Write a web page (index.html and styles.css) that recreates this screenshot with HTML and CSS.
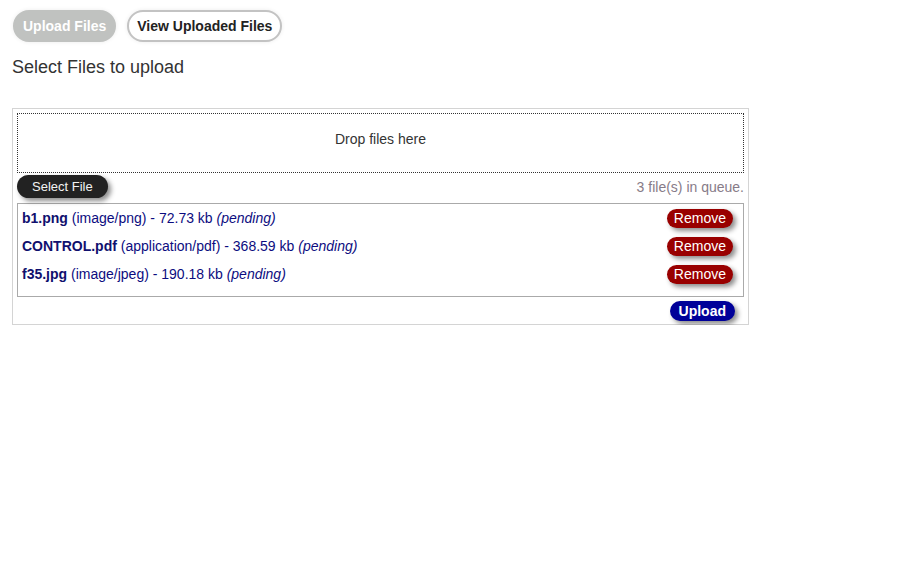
FILE: index.html
```html
<!DOCTYPE html>
<html>
<head>
<meta charset="utf-8">
<link rel="stylesheet" href="styles.css">
</head>
<body>
<div class="page">
  <nav class="tabs">
    <button class="tab tab-active">Upload Files</button>
    <button class="tab">View Uploaded Files</button>
  </nav>
  <h2 class="title">Select Files to upload</h2>
  <div class="uploader">
    <div class="dropzone">Drop files here</div>
    <div class="toolbar">
      <button class="btn-select">Select File</button>
      <span class="queue">3 file(s) in queue.</span>
    </div>
    <div class="filelist">
      <div class="file">
        <span class="info"><b>b1.png</b> (image/png) - 72.73 kb <i>(pending)</i></span>
        <button class="btn-remove">Remove</button>
      </div>
      <div class="file">
        <span class="info"><b>CONTROL.pdf</b> (application/pdf) - 368.59 kb <i>(pending)</i></span>
        <button class="btn-remove">Remove</button>
      </div>
      <div class="file">
        <span class="info"><b>f35.jpg</b> (image/jpeg) - 190.18 kb <i>(pending)</i></span>
        <button class="btn-remove">Remove</button>
      </div>
    </div>
    <div class="actions">
      <button class="btn-upload">Upload</button>
    </div>
  </div>
</div>
</body>
</html>
```

FILE: styles.css
```css
html, body {
  margin: 0;
  padding: 0;
  background: #fff;
  font-family: Arial, "Liberation Sans", sans-serif;
}

.page {
  padding: 10px 0 0 12px;
}

.tabs {
  display: flex;
  gap: 11px;
  padding-left: 1px;
}

.tab {
  height: 32px;
  padding: 0 8px;
  border: 2px solid #c3c3c3;
  border-radius: 16px;
  background: #fff;
  color: #222;
  font-family: Arial, "Liberation Sans", sans-serif;
  font-weight: bold;
  font-size: 14px;
  box-shadow: 0 0 4px rgba(0,0,0,0.08);
}

.tab-active {
  background: #c0c2c0;
  border-color: #c0c2c0;
  color: #fff;
}

.title {
  margin: 15px 0 0 0;
  font-size: 18px;
  font-weight: normal;
  color: #333;
  line-height: 21px;
}

.uploader {
  margin-top: 30px;
  width: 737px;
  box-sizing: border-box;
  border: 1px solid #d4d4d4;
  padding: 4px 4px 3px 4px;
}

.dropzone {
  height: 60px;
  box-sizing: border-box;
  border: 1px dotted #333;
  padding-top: 17px;
  text-align: center;
  line-height: 16px;
  font-size: 14px;
  color: #333;
}

.toolbar {
  display: flex;
  justify-content: space-between;
  align-items: center;
  margin-top: 2px;
}

.btn-select {
  height: 23px;
  padding: 0 15px;
  border: none;
  border-radius: 12px;
  background: #222;
  color: #f2f2f2;
  font-family: Arial, "Liberation Sans", sans-serif;
  font-size: 13px;
  box-shadow: 3px 3px 5px rgba(0,0,0,0.45);
}

.queue {
  font-size: 14px;
  color: #877b88;
}

.filelist {
  margin-top: 5px;
  border: 1px solid #aaa;
  padding: 0 10px 8px 4px;
}

.file {
  height: 28px;
  display: flex;
  align-items: center;
  justify-content: space-between;
  font-size: 14px;
  color: #0c0c80;
}

.file b {
  color: #10106e;
}

.btn-remove {
  height: 19px;
  padding: 0 7px;
  border: none;
  border-radius: 10px;
  background: #990000;
  color: #fff;
  font-family: Arial, "Liberation Sans", sans-serif;
  font-size: 14px;
  line-height: 19px;
  box-shadow: 3px 3px 5px rgba(0,0,0,0.45);
}

.actions {
  display: flex;
  justify-content: flex-end;
  padding: 4px 9px 0 0;
}

.btn-upload {
  height: 20px;
  padding: 0 9px;
  border: none;
  border-radius: 10px;
  background: #000099;
  color: #fff;
  font-family: Arial, "Liberation Sans", sans-serif;
  font-weight: bold;
  font-size: 14px;
  line-height: 20px;
  box-shadow: 3px 3px 5px rgba(0,0,0,0.45);
}
```
